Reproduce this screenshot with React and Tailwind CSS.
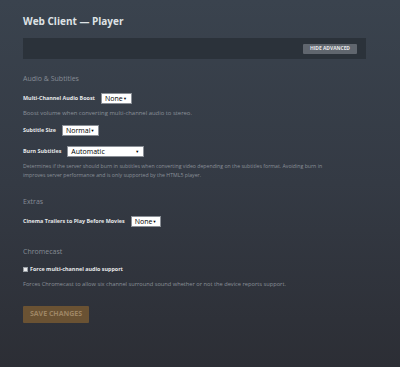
import React from "react";

function Select({ value, width }) {
  return (
    <div
      className="flex h-[11px] items-center justify-between border border-[#8a8f96] bg-white pl-[3px] pr-[4px] text-[7px] leading-none text-black"
      style={{ width }}
    >
      <span>{value}</span>
      <span className="text-[4px]">▼</span>
    </div>
  );
}

function Row({ label, children }) {
  return (
    <div className="flex h-[11px] items-center gap-[6px]">
      <span className="text-[5.4px] font-bold text-[#e6e8ea]">{label}</span>
      {children}
    </div>
  );
}

function Desc({ children, className = "" }) {
  return <p className={"leading-[9px] text-[#8a9098] " + className}>{children}</p>;
}

function Heading({ children, className = "" }) {
  return <h3 className={"h-[7px] text-[7px] leading-[7px] text-[#868c95] " + className}>{children}</h3>;
}

export default function App() {
  return (
    <div
      className="h-[367px] w-[400px] overflow-hidden bg-gradient-to-b from-[#3a434e] via-[#343a44] to-[#2c2e35] px-[23px] pt-[15px]"
      style={{ fontFamily: '"Open Sans", "Liberation Sans", sans-serif' }}
    >
      <h1 className="text-[10px] font-bold leading-[13px] text-[#dfe2e5]">Web Client — Player</h1>

      <div className="mt-[10px] flex h-[21px] w-[343px] items-center justify-end bg-[#2b323a] pr-[9px]">
        <button className="flex h-[10px] w-[54px] items-center justify-center rounded-[1px] bg-[#60666e] text-[4.9px] font-bold text-[#e8e9ea]">
          HIDE ADVANCED
        </button>
      </div>

      <Heading className="mt-[16px]">Audio &amp; Subtitles</Heading>

      <div className="mt-[11px]">
        <Row label="Multi-Channel Audio Boost">
          <Select value="None" width={31} />
        </Row>
        <Desc className="mt-[5px] text-[5.9px]">Boost volume when converting multi-channel audio to stereo.</Desc>
      </div>

      <div className="mt-[7px]">
        <Row label="Subtitle Size">
          <Select value="Normal" width={37} />
        </Row>
      </div>

      <div className="mt-[10px]">
        <Row label="Burn Subtitles">
          <Select value="Automatic" width={77} />
        </Row>
        <Desc className="mt-[5px] text-[5.2px]">
          Determines if the server should burn in subtitles when converting video depending on the subtitles format. Avoiding burn in
          <br />
          improves server performance and is only supported by the HTML5 player.
        </Desc>
      </div>

      <Heading className="mt-[18px]">Extras</Heading>

      <div className="mt-[11px]">
        <Row label="Cinema Trailers to Play Before Movies">
          <Select value="None" width={30} />
        </Row>
      </div>

      <Heading className="mt-[21px]">Chromecast</Heading>

      <div className="mt-[10px] flex h-[8px] items-center gap-[2px]">
        <span className="h-[5px] w-[5px] border border-[#9aa0a6] bg-[#ececec]" />
        <span className="text-[5.4px] font-bold text-[#e6e8ea]">Force multi-channel audio support</span>
      </div>
      <Desc className="mt-[7px] text-[5.7px]">Forces Chromecast to allow six channel surround sound whether or not the device reports support.</Desc>

      <button className="mt-[17px] flex h-[17px] w-[66px] items-center justify-center rounded-[1px] bg-[#6a5233] text-[7px] font-bold text-[#9e8564]">
        SAVE CHANGES
      </button>
    </div>
  );
}
